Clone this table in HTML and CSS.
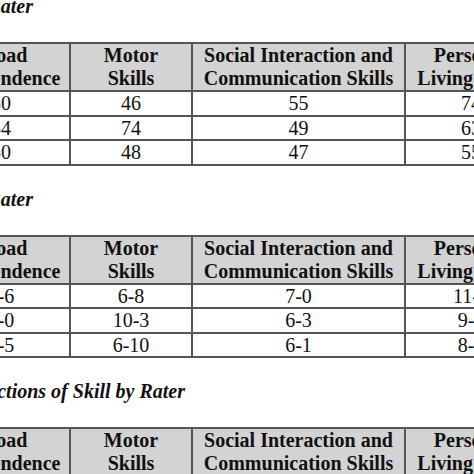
FILE: index.html
```html
<!DOCTYPE html>
<html lang="en">
<head>
<meta charset="utf-8">
<title>Skill by Rater</title>
<link rel="stylesheet" href="styles.css">
</head>
<body>
<main class="page">
  <section class="section">
    <div class="title title-short"><span>Table 1. Standard Scores by Rater</span></div>
    <table class="grid">
      <colgroup>
        <col class="c-rater"><col class="c-broad"><col class="c-motor"><col class="c-social"><col class="c-personal"><col class="c-community">
      </colgroup>
      <thead>
        <tr><th>Rater</th><th>Broad<br>Independence</th><th>Motor<br>Skills</th><th>Social Interaction and<br>Communication Skills</th><th>Personal<br>Living Skills</th><th>Community<br>Living Skills</th></tr>
      </thead>
      <tbody>
        <tr><td>Mother</td><td>50</td><td>46</td><td>55</td><td>74</td><td>52</td></tr>
        <tr><td>Father</td><td>54</td><td>74</td><td>49</td><td>63</td><td>58</td></tr>
        <tr><td>Teacher</td><td>50</td><td>48</td><td>47</td><td>55</td><td>51</td></tr>
      </tbody>
    </table>
  </section>

  <section class="section">
    <div class="title title-short"><span>Table 2. Age Equivalents by Rater</span></div>
    <table class="grid">
      <colgroup>
        <col class="c-rater"><col class="c-broad"><col class="c-motor"><col class="c-social"><col class="c-personal"><col class="c-community">
      </colgroup>
      <thead>
        <tr><th>Rater</th><th>Broad<br>Independence</th><th>Motor<br>Skills</th><th>Social Interaction and<br>Communication Skills</th><th>Personal<br>Living Skills</th><th>Community<br>Living Skills</th></tr>
      </thead>
      <tbody>
        <tr><td>Mother</td><td>8-6</td><td>6-8</td><td>7-0</td><td>11-2</td><td>8-1</td></tr>
        <tr><td>Father</td><td>8-0</td><td>10-3</td><td>6-3</td><td>9-4</td><td>8-9</td></tr>
        <tr><td>Teacher</td><td>7-5</td><td>6-10</td><td>6-1</td><td>8-7</td><td>7-11</td></tr>
      </tbody>
    </table>
  </section>

  <section class="section">
    <div class="title title-long"><span>Table 3. Descriptive Functions of Skill by Rater</span></div>
    <table class="grid">
      <colgroup>
        <col class="c-rater"><col class="c-broad"><col class="c-motor"><col class="c-social"><col class="c-personal"><col class="c-community">
      </colgroup>
      <thead>
        <tr><th>Rater</th><th>Broad<br>Independence</th><th>Motor<br>Skills</th><th>Social Interaction and<br>Communication Skills</th><th>Personal<br>Living Skills</th><th>Community<br>Living Skills</th></tr>
      </thead>
      <tbody>
        <tr><td>Mother</td><td>Limited</td><td>Limited</td><td>Limited</td><td>Age-appropriate</td><td>Limited</td></tr>
        <tr><td>Father</td><td>Limited</td><td>Limited to Age</td><td>Limited</td><td>Limited to Age</td><td>Limited</td></tr>
        <tr><td>Teacher</td><td>Limited</td><td>Limited</td><td>Limited</td><td>Limited</td><td>Limited</td></tr>
      </tbody>
    </table>
  </section>
</main>
</body>
</html>
```

FILE: styles.css
```css
html, body {
  margin: 0;
  padding: 0;
  overflow: hidden;
  background: #ffffff;
}

body {
  font-family: "Liberation Serif", "Times New Roman", serif;
  color: #111111;
}

.page {
  margin-left: -179px;
  margin-top: -5px;
  display: flex;
  flex-direction: column;
  gap: 22px;
}

.section {
  display: flex;
  flex-direction: column;
  gap: 24px;
}

.title {
  display: flex;
  justify-content: flex-end;
  font-size: 20px;
  line-height: 23px;
  font-weight: bold;
  font-style: italic;
}

.title span {
  white-space: nowrap;
}

.title-short { width: 212px; }
.title-long { width: 364px; }

.grid {
  border-collapse: collapse;
  table-layout: fixed;
  width: 855px;
  font-size: 20px;
}

.c-rater { width: 110px; }
.c-broad { width: 138px; }
.c-motor { width: 122px; }
.c-social { width: 213px; }
.c-personal { width: 132px; }
.c-community { width: 140px; }

.grid th,
.grid td {
  border: 2px solid #555555;
  padding: 0;
  text-align: center;
  white-space: nowrap;
}

.grid th {
  background: #d3d3d3;
  font-weight: bold;
  line-height: 23px;
}

.grid td {
  font-weight: normal;
  line-height: 22.5px;
}
```
